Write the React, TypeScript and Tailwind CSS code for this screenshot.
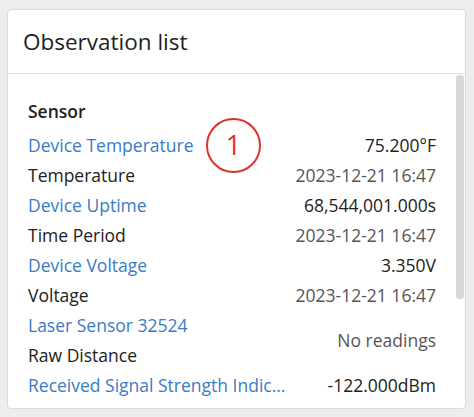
import React from 'react';

type Obs = {
  name: string;
  label: string;
  value?: string;
  time?: string;
};

const rows: Obs[] = [
  { name: 'Device Temperature', label: 'Temperature', value: '75.200°F', time: '2023-12-21 16:47' },
  { name: 'Device Uptime', label: 'Time Period', value: '68,544,001.000s', time: '2023-12-21 16:47' },
  { name: 'Device Voltage', label: 'Voltage', value: '3.350V', time: '2023-12-21 16:47' },
  { name: 'Laser Sensor 32524', label: 'Raw Distance' },
  { name: 'Received Signal Strength Indicator', label: 'Signal Strength', value: '-122.000dBm', time: '2023-12-21 16:47' },
];

function ObsRow({ o }: { o: Obs }) {
  return (
    <div className="flex items-center gap-2">
      <div className="min-w-0 flex-1">
        <div className="truncate text-[#3a7bc4]">{o.name}</div>
        <div className="truncate text-[#222]">{o.label}</div>
      </div>
      {o.value ? (
        <div className="shrink-0 text-right">
          <div className="text-[#222]">{o.value}</div>
          <div className="text-[#555]">{o.time}</div>
        </div>
      ) : (
        <div className="shrink-0 text-right text-[#555]">No readings</div>
      )}
    </div>
  );
}

export default function App() {
  return (
    <div
      className="h-[417px] w-[474px] overflow-hidden bg-[#ededed] pl-[7px] pt-[9px]"
      style={{ fontFamily: '"Open Sans", "Noto Sans", sans-serif' }}
    >
      <div className="relative flex h-[400px] w-[459px] flex-col overflow-hidden rounded-[4px] border border-[#d9d9d9] bg-white">
        <div className="flex h-[64px] shrink-0 items-center border-b border-[#dcdcdc] pl-[15px]">
          <span className="text-[22.5px] text-[#1f1f1f]">Observation list</span>
        </div>

        <div className="flex min-h-0 flex-1">
          <div className="min-w-0 flex-1 overflow-hidden pl-[20px] pr-[20px] pt-[22px] text-[17.5px] leading-[30px]">
            <div className="mb-[4px] font-semibold text-[#222]">Sensor</div>
            {rows.map((o) => (
              <ObsRow key={o.name} o={o} />
            ))}
          </div>
          <div className="w-[9px] shrink-0 pr-[1px] pt-[1px]">
            <div className="h-[224px] w-[8px] rounded-[3px] bg-[#d6d9dc]" />
          </div>
        </div>

        {/* annotation marker */}
        <div className="absolute left-[198px] top-[108px] flex h-[55px] w-[55px] items-center justify-center rounded-full border-[2.5px] border-[#d8342c] text-[27px] text-[#d8342c]">
          1
        </div>
      </div>
    </div>
  );
}
